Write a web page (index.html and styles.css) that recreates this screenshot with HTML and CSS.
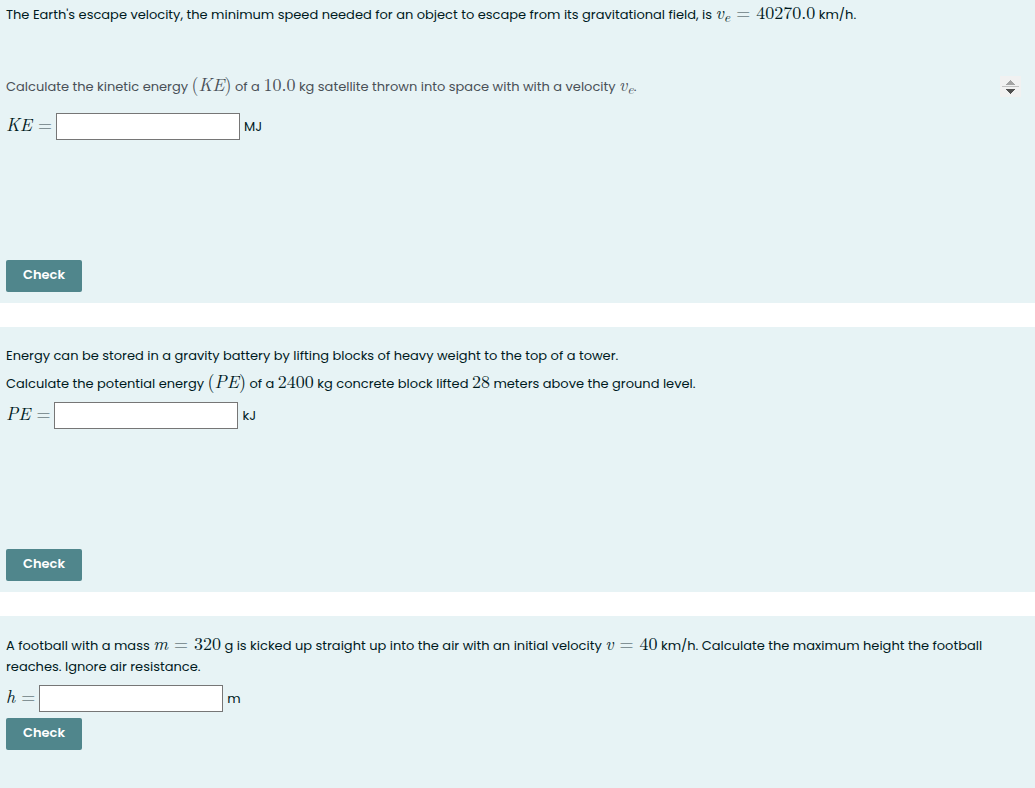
FILE: index.html
```html
<!DOCTYPE html>
<html lang="en">
<head>
    <meta charset="UTF-8">
    <meta name="viewport" content="width=device-width, initial-scale=1.0">
    <title>Energy quiz</title>
    <link rel="stylesheet" href="styles.css">
</head>
<body>
    <form class="question first">
        <p>The Earth's escape velocity, the minimum speed needed for an object to escape from its gravitational field, is <span class="math"><i>v</i><sub>e</sub> <span class="eq">=</span> 40270.0</span> km/h.</p>
        <div class="part">
            <p>Calculate the kinetic energy <span class="math">(<i>KE</i>)</span> of a <span class="math">10.0</span> kg satellite thrown into space with with a velocity <span class="math"><i>v</i><sub>e</sub></span>.</p>
            <button type="button" class="scroll-btn" aria-label="Scroll">
                <svg width="21" height="21" viewBox="0 0 21 21" shape-rendering="crispEdges">
                    <path d="M10 4h1v1h1v1h1v1h1v1h1v1H6V8h1V7h1V6h1V5h1z" fill="#a3a3a3"/>
                    <path d="M2 10h17v1H2z" fill="#c1c1c1"/>
                    <path d="M6 13h9v1h-1v1h-1v1h-1v1h-1v1h-1v-1H9v-1H8v-1H7v-1H6z" fill="#505050"/>
                </svg>
            </button>
        </div>
        <div class="answer">
            <label class="math" for="ke"><i>KE</i> <span class="eq">=</span></label>
            <input type="text" id="ke">
            <span>MJ</span>
        </div>
        <div class="feedback"></div>
        <button type="button" class="check">Check</button>
    </form>

    <form class="question">
        <p>Energy can be stored in a gravity battery by lifting blocks of heavy weight to the top of a tower.</p>
        <p>Calculate the potential energy <span class="math">(<i>PE</i>)</span> of a <span class="math">2400</span> kg concrete block lifted <span class="math">28</span> meters above the ground level.</p>
        <div class="answer">
            <label class="math" for="pe"><i>PE</i> <span class="eq">=</span></label>
            <input type="text" id="pe">
            <span>kJ</span>
        </div>
        <div class="feedback"></div>
        <button type="button" class="check">Check</button>
    </form>

    <form class="question last">
        <p>A football with a mass <span class="math"><i>m</i> <span class="eq">=</span> 320</span> g is kicked up straight up into the air with an initial velocity <span class="math"><i>v</i> <span class="eq">=</span> 40</span> km/h. Calculate the maximum height the football reaches. Ignore air resistance.</p>
        <div class="answer">
            <label class="math" for="h"><i>h</i> <span class="eq">=</span></label>
            <input type="text" id="h">
            <span>m</span>
        </div>
        <button type="button" class="check">Check</button>
    </form>
</body>
</html>
```
FILE: styles.css
```css
* {
    box-sizing: border-box;
}

body {
    display: flex;
    flex-direction: column;
    gap: 24px;
    min-height: 100vh;
    margin: 0;
    background: #fff;
    color: #001a1e;
    font-family: Poppins, Inter, sans-serif;
    font-size: 13px;
    line-height: 21px;
}

.question {
    padding: 18px 14px 11px 6px;
    background: #e7f3f5;
}

.question.first {
    padding-top: 4px;
}

.question.last {
    flex-grow: 1;
    padding-top: 19px;
    padding-right: 24px;
}

p {
    margin: 0 0 7px;
}

.part {
    display: flex;
    align-items: center;
    justify-content: space-between;
    margin: 51px 0 15px;
    color: #495057;
}

.part p {
    margin: 0;
}

.scroll-btn {
    flex-shrink: 0;
    padding: 0;
    border: none;
    background: #f1f1f1;
}

.scroll-btn svg {
    display: block;
}

.math {
    font-family: KaTeX_Main, "Latin Modern Roman", "Liberation Serif", serif;
    font-size: 18px;
    line-height: 0;
}

.math sub {
    font-size: 14px;
    font-style: italic;
    vertical-align: -3px;
}

.eq {
    color: #6b8084;
}

.answer {
    display: flex;
    align-items: baseline;
    gap: 4px;
    padding-top: 1px;
    margin-bottom: 6px;
}

.answer label {
    line-height: 1;
}

.answer input {
    width: 184px;
    height: 27px;
    padding: 2px 4px;
    border: 1px solid #767676;
    background: #fff;
    font: inherit;
}

.feedback {
    min-height: 114px;
}

.check {
    display: block;
    padding: 4px 17px 7px;
    border: none;
    border-radius: 2px;
    background: #50868c;
    color: #fff;
    font: inherit;
    font-weight: 600;
    cursor: pointer;
}
```
